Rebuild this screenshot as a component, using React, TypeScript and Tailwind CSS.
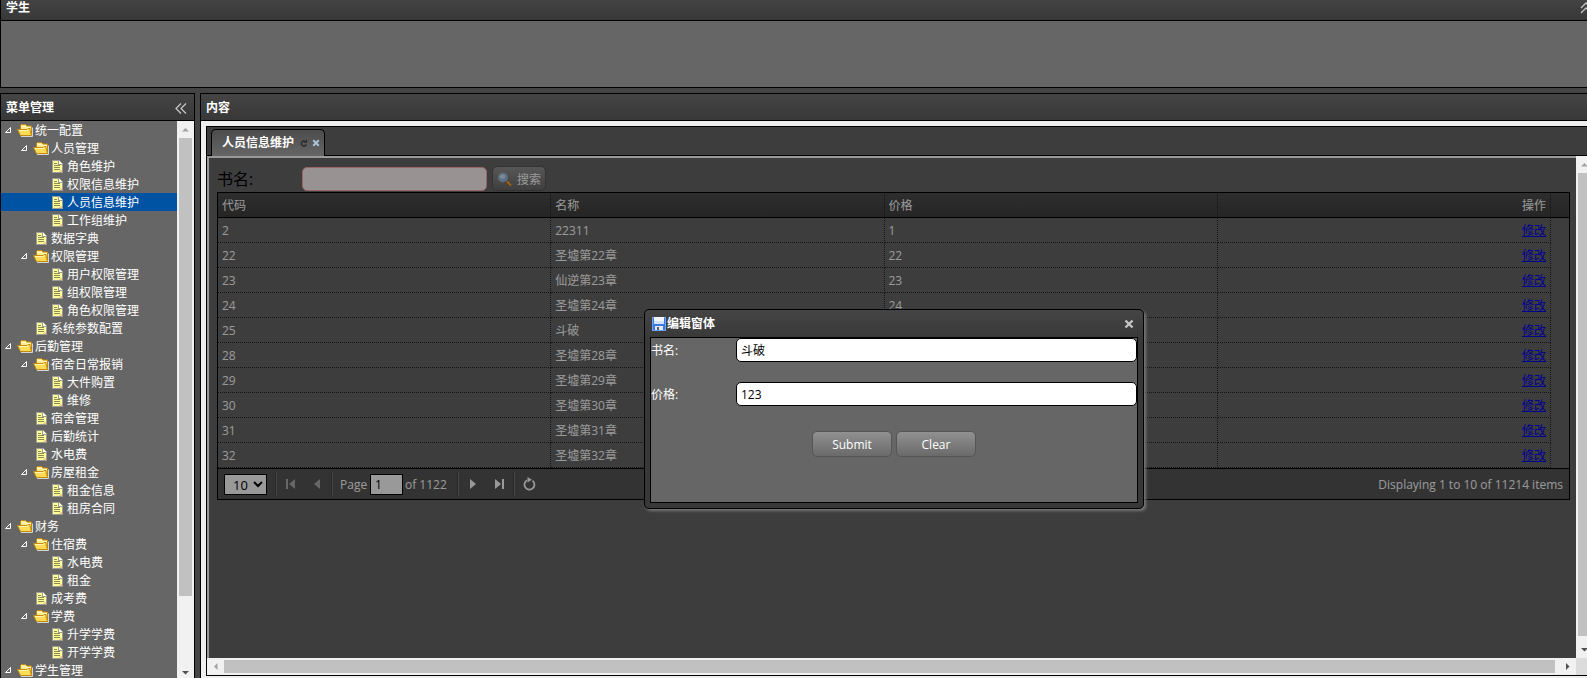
import clsx from 'clsx'
import { useState } from 'react'
import type { ReactNode } from 'react'

type TreeNode = { text: string; children?: TreeNode[] }

const MENU: TreeNode[] = [
  {
    text: '统一配置',
    children: [
      {
        text: '人员管理',
        children: [{ text: '角色维护' }, { text: '权限信息维护' }, { text: '人员信息维护' }, { text: '工作组维护' }]
      },
      { text: '数据字典' },
      { text: '权限管理', children: [{ text: '用户权限管理' }, { text: '组权限管理' }, { text: '角色权限管理' }] },
      { text: '系统参数配置' }
    ]
  },
  {
    text: '后勤管理',
    children: [
      { text: '宿舍日常报销', children: [{ text: '大件购置' }, { text: '维修' }] },
      { text: '宿舍管理' },
      { text: '后勤统计' },
      { text: '水电费' },
      { text: '房屋租金', children: [{ text: '租金信息' }, { text: '租房合同' }] }
    ]
  },
  {
    text: '财务',
    children: [
      { text: '住宿费', children: [{ text: '水电费' }, { text: '租金' }] },
      { text: '成考费' },
      { text: '学费', children: [{ text: '升学学费' }, { text: '开学学费' }] }
    ]
  },
  { text: '学生管理', children: [] }
]

const BOOKS = [
  { id: 2, name: '22311', price: '1' },
  { id: 22, name: '圣墟第22章', price: '22' },
  { id: 23, name: '仙逆第23章', price: '23' },
  { id: 24, name: '圣墟第24章', price: '24' },
  { id: 25, name: '斗破', price: '123' },
  { id: 28, name: '圣墟第28章', price: '28' },
  { id: 29, name: '圣墟第29章', price: '29' },
  { id: 30, name: '圣墟第30章', price: '30' },
  { id: 31, name: '圣墟第31章', price: '31' },
  { id: 32, name: '圣墟第32章', price: '32' }
]

const FolderIcon = () => (
  <svg className="shrink-0" width="16" height="18" viewBox="0 0 16 18" aria-hidden="true">
    <path d="M4 15.500h11.500V6.500" fill="none" stroke="#d4d4d4" />
    <path d="M3.500 14.500V4.500l1-1h4l1.500 1.500h4.500v9.500z" fill="#ffe98a" stroke="#c08a14" />
    <path d="M4.500 5.500h4l1 1h4" fill="none" stroke="#fff8c8" />
    <path d="M3.500 14.500L.5 8.500h9.500l1-1h2v1.500l1.500 5.500z" fill="#fddc55" stroke="#c08a14" />
    <path d="M2 9.500h8.500l1-1" fill="none" stroke="#fff6b0" />
  </svg>
)

const FileIcon = () => (
  <svg className="shrink-0" width="16" height="18" viewBox="-1 -1 16 18" shapeRendering="crispEdges" aria-hidden="true">
    <path d="M2 2h7l4 4v9H2z" fill="#9c9c90" />
    <path d="M3 3h5v4h4v7H3z" fill="#ffff99" />
    <path d="M9 3l3 3H9z" fill="#fffde0" />
    <path d="M10 12h2v2H8z" fill="#f7cf8a" />
    <path d="M4 5.500h3M4 7.500h6M4 9.500h6M4 11.500h6" stroke="#8a8a4c" />
  </svg>
)

const ExpandedIcon = () => (
  <svg className="shrink-0" width="16" height="18" viewBox="0 0 16 18" fill="none" stroke="#fff" aria-hidden="true">
    <path d="M9.500 6.500v5h-5z" />
  </svg>
)

const DoubleChevron = ({ up }: { up?: boolean }) => (
  <svg width="16" height="16" viewBox="0 0 16 16" fill="none" stroke="#c4c4c4" strokeWidth="1.300" aria-hidden="true">
    <path d={up ? 'M3 8l5-5 5 5M3 13l5-5 5 5' : 'M8 3.500l-5 5 5 5M13 3.500l-5 5 5 5'} />
  </svg>
)

const SearchIcon = () => (
  <svg width="16" height="16" viewBox="0 0 16 16" aria-hidden="true">
    <path d="M9 9l4.500 4.500" stroke="#9a6420" strokeWidth="3" />
    <path d="M10 9.500l4 4" stroke="#ffb038" strokeWidth="1.800" />
    <circle cx="6" cy="5.500" r="4.500" fill="#8fbfee" stroke="#a8aeb5" strokeWidth="1.200" />
    <ellipse cx="5.500" cy="4.500" rx="2.800" ry="2" fill="#cfe5fa" />
  </svg>
)

const SaveIcon = () => (
  <svg width="16" height="16" viewBox="0 0 16 16" aria-hidden="true">
    <rect x="1" y="1" width="14" height="14" rx="1" fill="#3b78e0" />
    <rect x="1.500" y="1.500" width="13" height="13" fill="none" stroke="#6ea2f5" />
    <path d="M3 1h10v7H3z" fill="#f2f6fd" />
    <path d="M3 5h10v3H3z" fill="#d3e2f8" />
    <path d="M4 10h8v4H4z" fill="#e4e8f0" />
    <path d="M6 11h2v3H6z" fill="#4a5f86" />
  </svg>
)

const CloseIcon = ({ color, size = 10 }: { color: string; size?: number }) => (
  <svg width={size} height={size} viewBox="0 0 10 10" stroke={color} strokeWidth="2.400" aria-hidden="true">
    <path d="M1.500 1.500l7 7M8.500 1.500l-7 7" />
  </svg>
)

const ReloadIcon = () => (
  <svg width="16" height="16" viewBox="0 0 16 16" fill="none" stroke="#fff" strokeWidth="1.800" aria-hidden="true">
    <path d="M6 4.200a5 5 0 1 0 5.500.4" />
    <path d="M6.500 1v5.500l4.500-2.700z" fill="#fff" stroke="none" />
  </svg>
)

const TabRefreshIcon = () => (
  <svg width="8" height="8" viewBox="0 0 8 8" fill="none" stroke="#2a2a2a" strokeWidth="1.400" aria-hidden="true">
    <path d="M5 2H3L1.500 3.500v2L3 7h2l1.500-1.500" />
    <path d="M4 4h3V0z" fill="#2a2a2a" stroke="none" />
  </svg>
)

const PAGER_PATHS = {
  first: 'M3 3h2v10H3zM12 3v10L6 8z',
  prev: 'M11 3v10L5 8z',
  next: 'M5 3v10l6-5z',
  last: 'M11 3h2v10h-2zM4 3v10l6-5z'
}

const PagerButton = ({ type, disabled }: { type: keyof typeof PAGER_PATHS; disabled?: boolean }) => (
  <button type="button" aria-label={type} disabled={disabled} className={clsx('flex h-6 w-[26px] items-center justify-center', disabled && 'opacity-50')}>
    <svg width="16" height="16" viewBox="0 0 16 16" fill="#fff" aria-hidden="true">
      <path d={PAGER_PATHS[type]} />
    </svg>
  </button>
)

const PagerSeparator = () => <div className="mx-px h-6 w-0.5 border-l border-[#444] bg-[#777]" />

const Arrow = ({ d, color }: { d: string; color: string }) => (
  <svg className="shrink-0" width="17" height="17" viewBox="0 0 17 17" fill={color} aria-hidden="true">
    <path d={d} />
  </svg>
)

const VerticalScroll = ({ children }: { children: ReactNode }) => (
  <div className="flex w-[17px] shrink-0 flex-col bg-[#f1f1f1]">
    <Arrow d="M5 10.500h7L8.500 7z" color="#a3a3a3" />
    <div className="min-h-0 flex-1 px-0.5">{children}</div>
    <Arrow d="M5 7h7l-3.500 3.500z" color="#505050" />
  </div>
)

const PanelHeader = ({ title, children }: { title: string; children?: ReactNode }) => (
  <div className="flex h-[27px] shrink-0 items-center justify-between border-b border-black bg-linear-to-b from-[#454545] to-[#383838] px-[5px] pt-0.5 font-bold">
    <h2>{title}</h2>
    {children}
  </div>
)

const LinkButton = ({ className, ...rest }: React.ComponentProps<'button'>) => (
  <button
    className={clsx('flex items-center justify-center rounded-[5px] border border-[#555] bg-linear-to-b from-[#919191] to-[#6a6a6a] pt-0.5', className)}
    {...rest}
  />
)

const Tree = ({ nodes, level = 0, selected }: { nodes: TreeNode[]; level?: number; selected: string }) => (
  <ul>
    {nodes.map(node => (
      <li key={node.text}>
        <div
          className={clsx('flex h-[18px] cursor-pointer items-center whitespace-nowrap', node.text === selected && 'bg-[#0052a3]')}
          style={{ paddingLeft: level * 16 }}
        >
          {node.children ? <ExpandedIcon /> : <span className="w-4" />}
          {node.children ? <FolderIcon /> : <FileIcon />}
          <span className="px-0.5 pt-0.5">{node.text}</span>
        </div>
        {node.children && <Tree nodes={node.children} level={level + 1} selected={selected} />}
      </li>
    ))}
  </ul>
)

const cell = 'h-[25px] border-r border-b border-dotted border-[#222] px-1 pt-0.5 font-normal leading-[22px]'
const headCell = clsx(cell, 'border-b-black [border-bottom-style:solid]')

const BookGrid = () => (
  <div className="border border-black">
    <table className="w-full table-fixed border-separate border-spacing-0 text-left">
      <colgroup>
        <col />
        <col />
        <col />
        <col />
        <col className="w-[18px]" />
      </colgroup>
      <thead className="bg-linear-to-b from-[#4c4c4c] to-[#3f3f3f]">
        <tr>
          <th className={headCell}>代码</th>
          <th className={headCell}>名称</th>
          <th className={headCell}>价格</th>
          <th className={clsx(headCell, 'text-right')}>操作</th>
          <td className="border-b border-black" />
        </tr>
      </thead>
      <tbody>
        {BOOKS.map(book => (
          <tr key={book.id}>
            <td className={cell}>{book.id}</td>
            <td className={cell}>{book.name}</td>
            <td className={cell}>{book.price}</td>
            <td className={clsx(cell, 'text-right')}>
              <a href="#edit" className="text-[#00e] underline">
                修改
              </a>
            </td>
            <td />
          </tr>
        ))}
      </tbody>
    </table>
    <div className="flex h-[31px] items-center border-t border-black bg-[#555] px-1.5">
      <select aria-label="Page size" className="mr-[7px] h-[21px] w-[43px] border border-black bg-white pl-1 text-[13px] text-black">
        <option>10</option>
      </select>
      <PagerSeparator />
      <PagerButton type="first" disabled />
      <PagerButton type="prev" disabled />
      <PagerSeparator />
      <label htmlFor="page" className="w-9 pt-0.5 pl-1.5">
        Page
      </label>
      <input id="page" defaultValue="1" className="h-[21px] w-[33px] border border-black bg-white px-1 text-black" />
      <span className="w-[53px] pt-0.5 pl-0.5">of 1122</span>
      <PagerSeparator />
      <PagerButton type="next" />
      <PagerButton type="last" />
      <PagerSeparator />
      <button type="button" aria-label="Reload" className="flex h-6 w-[26px] items-center justify-center">
        <ReloadIcon />
      </button>
      <span className="ml-auto pt-0.5">Displaying 1 to 10 of 11214 items</span>
    </div>
  </div>
)

const fieldInput = 'h-6 min-w-0 flex-1 rounded-[5px] border border-black bg-white px-1 text-black'

const EditDialog = () => {
  const [name, setName] = useState('斗破')
  const [price, setPrice] = useState('123')

  const onClear = () => {
    setName('')
    setPrice('')
  }

  return (
    <div
      role="dialog"
      aria-label="编辑窗体"
      className="flex h-[200px] w-[500px] flex-col rounded-[5px] border border-black bg-linear-to-b from-[#454545] to-[#383838] to-15% px-[5px] pb-[5px] shadow-[2px_2px_3px_#787878]"
    >
      <div className="flex h-[27px] items-center pl-px font-bold">
        <SaveIcon />
        <span>编辑窗体</span>
        <button type="button" aria-label="Close" className="mr-1 ml-auto">
          <CloseIcon color="#c4c4c4" />
        </button>
      </div>
      <form className="flex-1 border border-black bg-[#666]" onSubmit={e => e.preventDefault()}>
        <div className="mb-5 flex items-center">
          <label htmlFor="book-name" className="w-[85px] pt-0.5">
            书名:
          </label>
          <input id="book-name" value={name} onChange={e => setName(e.target.value)} className={fieldInput} />
        </div>
        <div className="mb-[25px] flex items-center">
          <label htmlFor="book-price" className="w-[85px] pt-0.5">
            价格:
          </label>
          <input id="book-price" value={price} onChange={e => setPrice(e.target.value)} className={fieldInput} />
        </div>
        <div className="flex justify-center gap-1">
          <LinkButton type="submit" className="h-[26px] w-20">
            Submit
          </LinkButton>
          <LinkButton type="button" className="h-[26px] w-20" onClick={onClear}>
            Clear
          </LinkButton>
        </div>
      </form>
    </div>
  )
}

export default function App() {
  return (
    <div className="h-screen overflow-hidden bg-[#444] font-['Open_Sans','Noto_Sans_CJK_SC',sans-serif] text-xs leading-4 text-white">
      {/* the layout is a little larger than the window, its right and bottom edges are cut off */}
      <div className="flex h-[calc(100%+4px)] w-[calc(100%+13px)] flex-col gap-[5px]">
        <header className="shrink-0 border-x border-b border-black bg-[#666]">
          <div className="flex h-[21px] items-center justify-between border-b border-black bg-linear-to-b from-[#434343] to-[#383838] px-[5px] pb-1 font-bold">
            <h1>学生</h1>
            <button type="button" aria-label="Collapse">
              <DoubleChevron up />
            </button>
          </div>
          <div className="h-[66px]" />
        </header>

        <div className="flex min-h-0 flex-1 gap-[5px]">
          <nav className="flex w-[195px] shrink-0 flex-col border border-black bg-[#666]">
            <PanelHeader title="菜单管理">
              <button type="button" aria-label="Collapse">
                <DoubleChevron />
              </button>
            </PanelHeader>
            <div className="flex min-h-0 flex-1">
              <div className="min-w-0 flex-1 overflow-hidden">
                <Tree nodes={MENU} selected="人员信息维护" />
              </div>
              <VerticalScroll>
                <div className="h-[87%] bg-[#c1c1c1]" />
              </VerticalScroll>
            </div>
          </nav>

          <main className="flex min-w-0 flex-1 flex-col border border-black">
            <PanelHeader title="内容" />
            <div className="flex min-h-0 flex-1 flex-col bg-[#efefef] p-[5px]">
              <div className="flex min-h-0 flex-1 flex-col border border-black bg-[#3d3d3d]">
                <div className="flex h-[29px] shrink-0 items-end border-b border-black pl-1">
                  <div className="-mb-px flex h-[27px] w-[114px] items-center rounded-t-[5px] border border-b-0 border-black bg-linear-to-b from-[#4c4c4c] to-[#666] pl-2.5">
                    <span className="font-bold">人员信息维护</span>
                    <button type="button" aria-label="Refresh" className="ml-1.5">
                      <TabRefreshIcon />
                    </button>
                    <button type="button" aria-label="Close tab" className="ml-1">
                      <CloseIcon color="#a9c4dd" size={8} />
                    </button>
                  </div>
                </div>

                <div className="flex min-h-0 flex-1">
                  <div className="relative min-w-0 flex-1 overflow-hidden border-t-2 border-l-2 border-[#999] bg-[#666]">
                    <div className="pt-2 pr-1.5 pl-2">
                      <div className="flex items-center pb-px">
                        <label htmlFor="search" className="w-[85px] text-base leading-6 text-black">
                          书名:
                        </label>
                        <input id="search" className="h-6 w-[185px] rounded-[5px] border border-[#ffa8a8] bg-[#fff3f3] px-1 text-black" />
                        <LinkButton type="button" className="ml-[5px] h-[25px] w-[54px] gap-1">
                          <SearchIcon />
                          搜索
                        </LinkButton>
                      </div>
                      <BookGrid />
                    </div>
                    <div className="absolute inset-0 flex items-center justify-center bg-black/40 pt-0.5 pl-[3px]">
                      <EditDialog />
                    </div>
                  </div>
                  <VerticalScroll>
                    <div className="h-[99%] bg-[#c1c1c1]" />
                  </VerticalScroll>
                </div>

                <div className="flex h-[17px] shrink-0 bg-[#f1f1f1]">
                  <Arrow d="M10.500 5v7L7 8.500z" color="#a3a3a3" />
                  <div className="my-0.5 mr-1 flex-1 bg-[#c1c1c1]" />
                  <Arrow d="M7 5v7l3.500-3.500z" color="#505050" />
                  <div className="w-[17px] bg-[#dcdcdc]" />
                </div>
              </div>
            </div>
          </main>
        </div>
      </div>
    </div>
  )
}
